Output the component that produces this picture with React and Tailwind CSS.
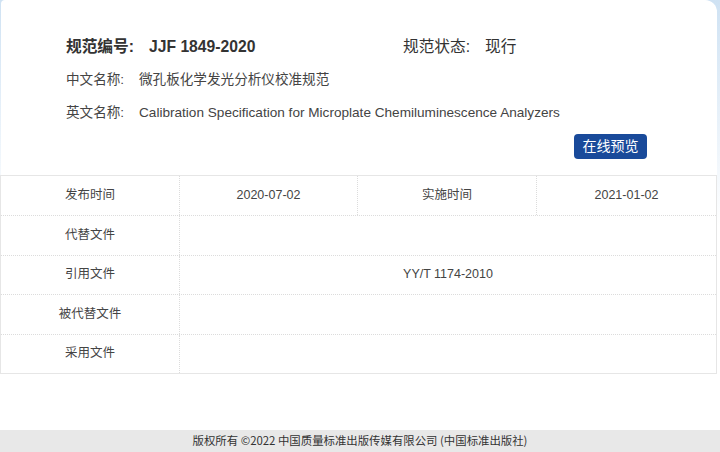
import React from 'react';

const font = { fontFamily: '"Liberation Sans", "Noto Sans CJK SC", sans-serif' };

function Cell({ children, className = '' }) {
  return (
    <div className={`flex items-center justify-center text-[12.5px] text-[#444] ${className}`}>
      {children}
    </div>
  );
}

export default function App() {
  const rows = [
    ['代替文件', ''],
    ['引用文件', 'YY/T 1174-2010'],
    ['被代替文件', ''],
    ['采用文件', ''],
  ];

  return (
    <div
      className="w-[720px] h-[452px] flex flex-col bg-gradient-to-b from-[#cfe2f3] via-white to-white"
      style={font}
    >
      <div className="ml-[1px] w-[716px] bg-white rounded-tr-[12px] rounded-tl-[4px] pt-[36px]">
        <div className="pl-[65px] pr-[70px]">
          <div className="flex items-center h-[22px] text-[15.7px] text-[#333]">
            <span className="font-bold w-[83px]">规范编号:</span>
            <span className="font-bold w-[254px]">JJF 1849-2020</span>
            <span className="w-[82px]">规范状态:</span>
            <span>现行</span>
          </div>
          <div className="flex items-center h-[20px] mt-[12px] text-[13.6px] text-[#444]">
            <span className="w-[73px]">中文名称:</span>
            <span>微孔板化学发光分析仪校准规范</span>
          </div>
          <div className="flex items-center h-[20px] mt-[13px] text-[13.6px] text-[#444]">
            <span className="w-[73px]">英文名称:</span>
            <span>Calibration Specification for Microplate Chemiluminescence Analyzers</span>
          </div>
          <div className="flex justify-end mt-[11px]">
            <button className="w-[73px] h-[25px] bg-[#194a9a] text-white text-[14px] rounded-[4px] flex items-center justify-center">
              在线预览
            </button>
          </div>
        </div>

        <div className="mt-[16px] border border-[#e6e6e6] -ml-[1px]">
          <div className="grid grid-cols-[179px_178px_179px_1fr] h-[39px]">
            <Cell className="border-r border-dotted border-[#dcdcdc]">发布时间</Cell>
            <Cell className="border-r border-dotted border-[#dcdcdc] text-[#333]">2020-07-02</Cell>
            <Cell className="border-r border-dotted border-[#dcdcdc]">实施时间</Cell>
            <Cell className="text-[#333]">2021-01-02</Cell>
          </div>
          {rows.map(([k, v]) => (
            <div
              key={k}
              className="grid grid-cols-[179px_1fr] h-[39.5px] border-t border-dotted border-[#dcdcdc]"
            >
              <Cell className="border-r border-dotted border-[#dcdcdc]">{k}</Cell>
              <Cell className="text-[#111]">{v}</Cell>
            </div>
          ))}
        </div>
      </div>

      <div className="flex-1 bg-white" />

      <div
        className="h-[22px] bg-[#e8e8e8] flex items-center justify-center text-[11.4px] text-[#333]"
        style={{ fontFamily: '"Noto Sans CJK SC", sans-serif' }}
      >
        版权所有 ©2022 中国质量标准出版传媒有限公司 (中国标准出版社)
      </div>
    </div>
  );
}
